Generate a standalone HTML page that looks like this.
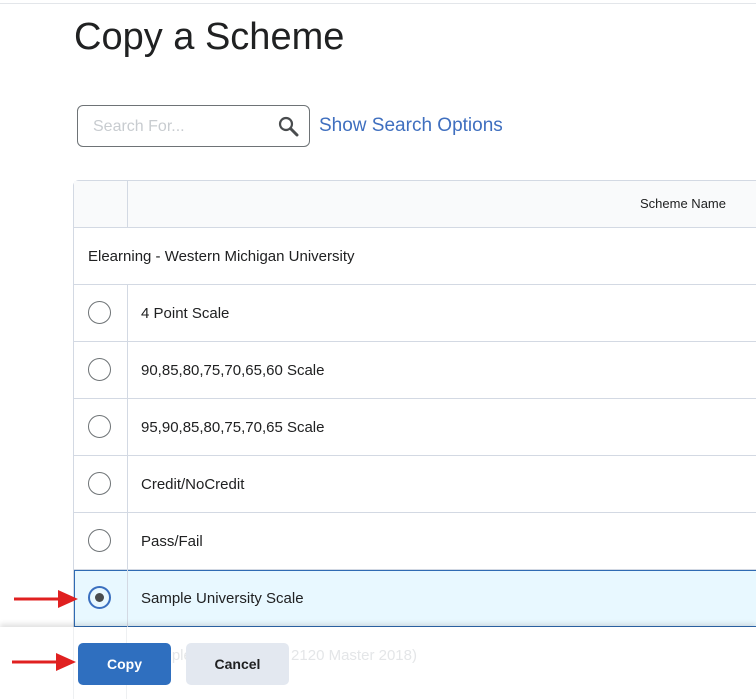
<!DOCTYPE html>
<html><head><style>
body{margin:0;width:756px;height:699px;overflow:hidden;background:#fff;font-family:"Liberation Sans",sans-serif;color:#202122;position:relative}
.top{position:absolute;left:0;top:0;width:756px;height:3px;border-bottom:1px solid #e3e6ea}
h1{position:absolute;left:74px;top:16px;margin:0;font-weight:normal;font-size:38px;color:#202122}
.search{position:absolute;left:77px;top:105px;width:233px;height:42px;border:1px solid #6e7376;border-radius:6px;box-sizing:border-box}
.search span{position:absolute;left:15px;top:12px;font-size:16px;color:#c8ccd0}
.search svg{position:absolute;left:200px;top:10px}
.sso{position:absolute;left:319px;top:115px;font-size:19px;color:#3f6fbf}
.tbl{position:absolute;left:73px;top:180px;width:700px;border:1px solid #d3d9e3;border-radius:6px 0 0 0}
.row{height:56px;border-bottom:1px solid #d3d9e3;position:relative;font-size:15px}
.row .c{position:absolute;left:53px;top:0;bottom:-1px;border-left:1px solid #d3d9e3}
.row .t{position:absolute;left:67px;top:20px}
.radio{position:absolute;left:14px;top:16px;width:23px;height:23px;border:1px solid #6e7376;border-radius:50%;box-sizing:border-box}
.hdr{height:46px;background:#f9fafb}
.grp .t{left:14px}
.sel{background:#e8f8ff;outline:1px solid #2f6bb3;outline-offset:-1px}
.sel .radio{border:2px solid #3a6fbf}
.sel .radio:after{content:"";position:absolute;left:5px;top:5px;width:9px;height:9px;border-radius:50%;background:#494c4e}
.footer{position:absolute;left:0;top:627px;width:756px;height:72px;background:#fff;box-shadow:0 -3px 5px rgba(0,0,0,.12)}
.faded{position:absolute;left:141px;top:647px;font-size:15px;color:#e4e6e8}
.btn{position:absolute;top:643px;height:42px;border-radius:5px;font-weight:bold;font-size:14px;text-align:center;line-height:42px}
.arrow{position:absolute}
</style></head><body>
<div class="top"></div>
<h1>Copy a Scheme</h1>
<div class="search"><span>Search For...</span>
<svg width="22" height="22" viewBox="0 0 22 22"><circle cx="8" cy="8" r="6" fill="none" stroke="#494c4e" stroke-width="2.2"/><line x1="12.5" y1="12.5" x2="19" y2="19" stroke="#494c4e" stroke-width="3" stroke-linecap="round"/></svg></div>
<div class="sso">Show Search Options</div>
<div class="tbl">
<div class="row hdr"><div class="c"></div><div class="t" style="left:566px;top:15px;font-size:13px">Scheme Name</div></div>
<div class="row grp"><div class="t">Elearning - Western Michigan University</div></div>
<div class="row"><div class="radio"></div><div class="c"></div><div class="t">4 Point Scale</div></div>
<div class="row"><div class="radio"></div><div class="c"></div><div class="t">90,85,80,75,70,65,60 Scale</div></div>
<div class="row"><div class="radio"></div><div class="c"></div><div class="t">95,90,85,80,75,70,65 Scale</div></div>
<div class="row"><div class="radio"></div><div class="c"></div><div class="t">Credit/NoCredit</div></div>
<div class="row"><div class="radio"></div><div class="c"></div><div class="t">Pass/Fail</div></div>
<div class="row sel"><div class="radio"></div><div class="c"></div><div class="t">Sample University Scale</div></div>
</div>
<div class="footer"></div>
<div style="position:absolute;left:73px;top:627px;width:1px;height:72px;background:#eef0f2"></div>
<div style="position:absolute;left:126px;top:627px;width:1px;height:72px;background:#eef0f2"></div>
<div class="faded">Sample Map... (PSYS 2120 Master 2018)</div>
<div class="btn" style="left:78px;width:93px;background:#2f6fbf;color:#fff">Copy</div>
<div class="btn" style="left:186px;width:103px;background:#e3e8f0;color:#202122">Cancel</div>
<svg class="arrow" style="left:12px;top:588px" width="68" height="22"><line x1="2" y1="11" x2="50" y2="11" stroke="#e02020" stroke-width="3"/><polygon points="46,2 66,11 46,20" fill="#e02020"/></svg>
<svg class="arrow" style="left:10px;top:651px" width="68" height="22"><line x1="2" y1="11" x2="50" y2="11" stroke="#e02020" stroke-width="3"/><polygon points="46,2 66,11 46,20" fill="#e02020"/></svg>
</body></html>
